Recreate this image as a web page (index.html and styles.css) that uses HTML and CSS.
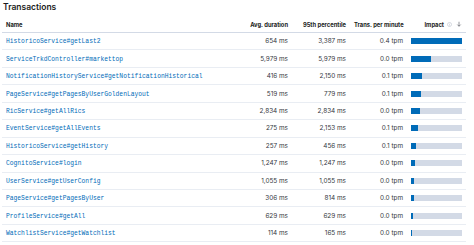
FILE: index.html
```html
<!DOCTYPE html>
<html lang="en">
<head>
    <meta charset="UTF-8">
    <title>Transactions</title>
    <link rel="stylesheet" href="styles.css">
</head>
<body>
    <div class="panel">
        <h3 class="title">Transactions</h3>
        <div class="table">
            <div class="row head">
                <div class="cell name">Name</div>
                <div class="cell num">Avg. duration</div>
                <div class="cell num">95th percentile</div>
                <div class="cell num">Trans. per minute</div>
                <div class="cell num impact-head">
                    Impact
                    <svg class="info" viewBox="0 0 16 16"><circle cx="8" cy="8" r="6.5" fill="none" stroke="currentColor" stroke-width="1.2"/><path d="M8 7v4.5M8 4.6v.9" stroke="currentColor" stroke-width="1.4"/></svg>
                    <svg class="sort" viewBox="0 0 16 16"><path d="M8 2v12M3.5 9.5 8 14l4.5-4.5" fill="none" stroke="currentColor" stroke-width="1.4"/></svg>
                </div>
            </div>
            <div class="row"><div class="cell name"><a href="#">HistoricoService#getLast2</a></div><div class="cell num">654 ms</div><div class="cell num">3,387 ms</div><div class="cell num">0.4 tpm</div><div class="cell impact"><div class="bar"><div class="fill" style="width:100%"></div></div></div></div>
            <div class="row"><div class="cell name"><a href="#">ServiceTrkdController#markettop</a></div><div class="cell num">5,979 ms</div><div class="cell num">5,979 ms</div><div class="cell num">0.0 tpm</div><div class="cell impact"><div class="bar"><div class="fill" style="width:39%"></div></div></div></div>
            <div class="row"><div class="cell name"><a href="#">NotificationHistoryService#getNotificationHistorical</a></div><div class="cell num">416 ms</div><div class="cell num">2,150 ms</div><div class="cell num">0.1 tpm</div><div class="cell impact"><div class="bar"><div class="fill" style="width:22%"></div></div></div></div>
            <div class="row"><div class="cell name"><a href="#">PageService#getPagesByUserGoldenLayout</a></div><div class="cell num">519 ms</div><div class="cell num">779 ms</div><div class="cell num">0.1 tpm</div><div class="cell impact"><div class="bar"><div class="fill" style="width:20%"></div></div></div></div>
            <div class="row"><div class="cell name"><a href="#">RicService#getAllRics</a></div><div class="cell num">2,834 ms</div><div class="cell num">2,834 ms</div><div class="cell num">0.0 tpm</div><div class="cell impact"><div class="bar"><div class="fill" style="width:17%"></div></div></div></div>
            <div class="row"><div class="cell name"><a href="#">EventService#getAllEvents</a></div><div class="cell num">275 ms</div><div class="cell num">2,153 ms</div><div class="cell num">0.1 tpm</div><div class="cell impact"><div class="bar"><div class="fill" style="width:13%"></div></div></div></div>
            <div class="row"><div class="cell name"><a href="#">HistoricoService#getHistory</a></div><div class="cell num">257 ms</div><div class="cell num">456 ms</div><div class="cell num">0.1 tpm</div><div class="cell impact"><div class="bar"><div class="fill" style="width:9%"></div></div></div></div>
            <div class="row"><div class="cell name"><a href="#">CognitoService#login</a></div><div class="cell num">1,247 ms</div><div class="cell num">1,247 ms</div><div class="cell num">0.0 tpm</div><div class="cell impact"><div class="bar"><div class="fill" style="width:7%"></div></div></div></div>
            <div class="row"><div class="cell name"><a href="#">UserService#getUserConfig</a></div><div class="cell num">1,055 ms</div><div class="cell num">1,055 ms</div><div class="cell num">0.0 tpm</div><div class="cell impact"><div class="bar"><div class="fill" style="width:6%"></div></div></div></div>
            <div class="row"><div class="cell name"><a href="#">PageService#getPagesByUser</a></div><div class="cell num">306 ms</div><div class="cell num">814 ms</div><div class="cell num">0.0 tpm</div><div class="cell impact"><div class="bar"><div class="fill" style="width:5%"></div></div></div></div>
            <div class="row"><div class="cell name"><a href="#">ProfileService#getAll</a></div><div class="cell num">629 ms</div><div class="cell num">629 ms</div><div class="cell num">0.0 tpm</div><div class="cell impact"><div class="bar"><div class="fill" style="width:4%"></div></div></div></div>
            <div class="row"><div class="cell name"><a href="#">WatchlistService#getWatchlist</a></div><div class="cell num">114 ms</div><div class="cell num">165 ms</div><div class="cell num">0.0 tpm</div><div class="cell impact"><div class="bar"><div class="fill" style="width:2%"></div></div></div></div>
        </div>
    </div>
</body>
</html>
```

FILE: styles.css
```css
body {
    margin: 0;
    background: #fff;
    font-family: Inter, "Noto Sans", sans-serif;
    color: #343741;
}
.panel {
    padding: 2px 8px 0 2px;
}
.title {
    margin: 0 0 0 1px;
    font-size: 8.5px;
    line-height: 11px;
    font-weight: 600;
    color: #1a1c21;
}
.table {
    margin-top: 3px;
}
.row {
    display: grid;
    grid-template-columns: 230px 60px 58px 57px 59px;
    height: 17.45px;
    border-bottom: 1px solid #e9edf3;
    box-sizing: border-box;
    align-items: center;
    font-size: 6.4px;
}
.row.head {
    height: 17px;
    border-bottom-color: #d3dae6;
    font-weight: 700;
    font-size: 5.8px;
    color: #1a1c21;
}
.cell {
    padding: 0 4px;
    white-space: nowrap;
    overflow: hidden;
}
.name a {
    font-family: "Liberation Mono", monospace;
    font-size: 6.3px;
    color: #006bb8;
    text-decoration: none;
}
.num {
    text-align: right;
}
.impact-head {
    display: flex;
    align-items: center;
    justify-content: flex-end;
    gap: 2px;
}
.info {
    width: 5px;
    height: 5px;
    color: #98a2b3;
    margin-left: 1px;
}
.sort {
    width: 6px;
    height: 6px;
    color: #343741;
    margin-left: 2px;
}
.bar {
    height: 6px;
    background: #d3dae6;
}
.fill {
    height: 100%;
    background: #006bb8;
}
```
